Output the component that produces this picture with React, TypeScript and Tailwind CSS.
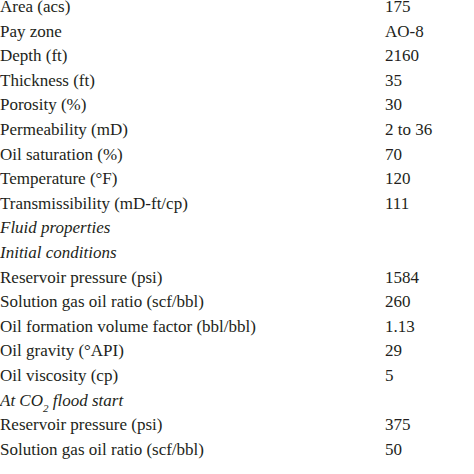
const rows: { label: React.ReactNode; value?: string; italic?: boolean }[] = [
  { label: 'Area (acs)', value: '175' },
  { label: 'Pay zone', value: 'AO-8' },
  { label: 'Depth (ft)', value: '2160' },
  { label: 'Thickness (ft)', value: '35' },
  { label: 'Porosity (%)', value: '30' },
  { label: 'Permeability (mD)', value: '2 to 36' },
  { label: 'Oil saturation (%)', value: '70' },
  { label: 'Temperature (°F)', value: '120' },
  { label: 'Transmissibility (mD-ft/cp)', value: '111' },
  { label: 'Fluid properties', italic: true },
  { label: 'Initial conditions', italic: true },
  { label: 'Reservoir pressure (psi)', value: '1584' },
  { label: 'Solution gas oil ratio (scf/bbl)', value: '260' },
  { label: 'Oil formation volume factor (bbl/bbl)', value: '1.13' },
  { label: 'Oil gravity (°API)', value: '29' },
  { label: 'Oil viscosity (cp)', value: '5' },
  {
    label: (
      <>
        At CO<sub className="text-[11px] leading-none align-[-4px]">2</sub> flood start
      </>
    ),
    italic: true,
  },
  { label: 'Reservoir pressure (psi)', value: '375' },
  { label: 'Solution gas oil ratio (scf/bbl)', value: '50' },
];

export default function App() {
  return (
    <div className="w-[474px] h-[474px] overflow-hidden bg-white">
      <div className="-mt-[5px] font-['Liberation_Serif','Times_New_Roman',serif] text-[17px] leading-[24.6px] text-[#231f20]">
        {rows.map((row, i) => (
          <div key={i} className="grid grid-cols-[385px_1fr] whitespace-nowrap">
            <span className={row.italic ? 'italic' : ''}>{row.label}</span>
            <span>{row.value ?? ''}</span>
          </div>
        ))}
      </div>
    </div>
  );
}
